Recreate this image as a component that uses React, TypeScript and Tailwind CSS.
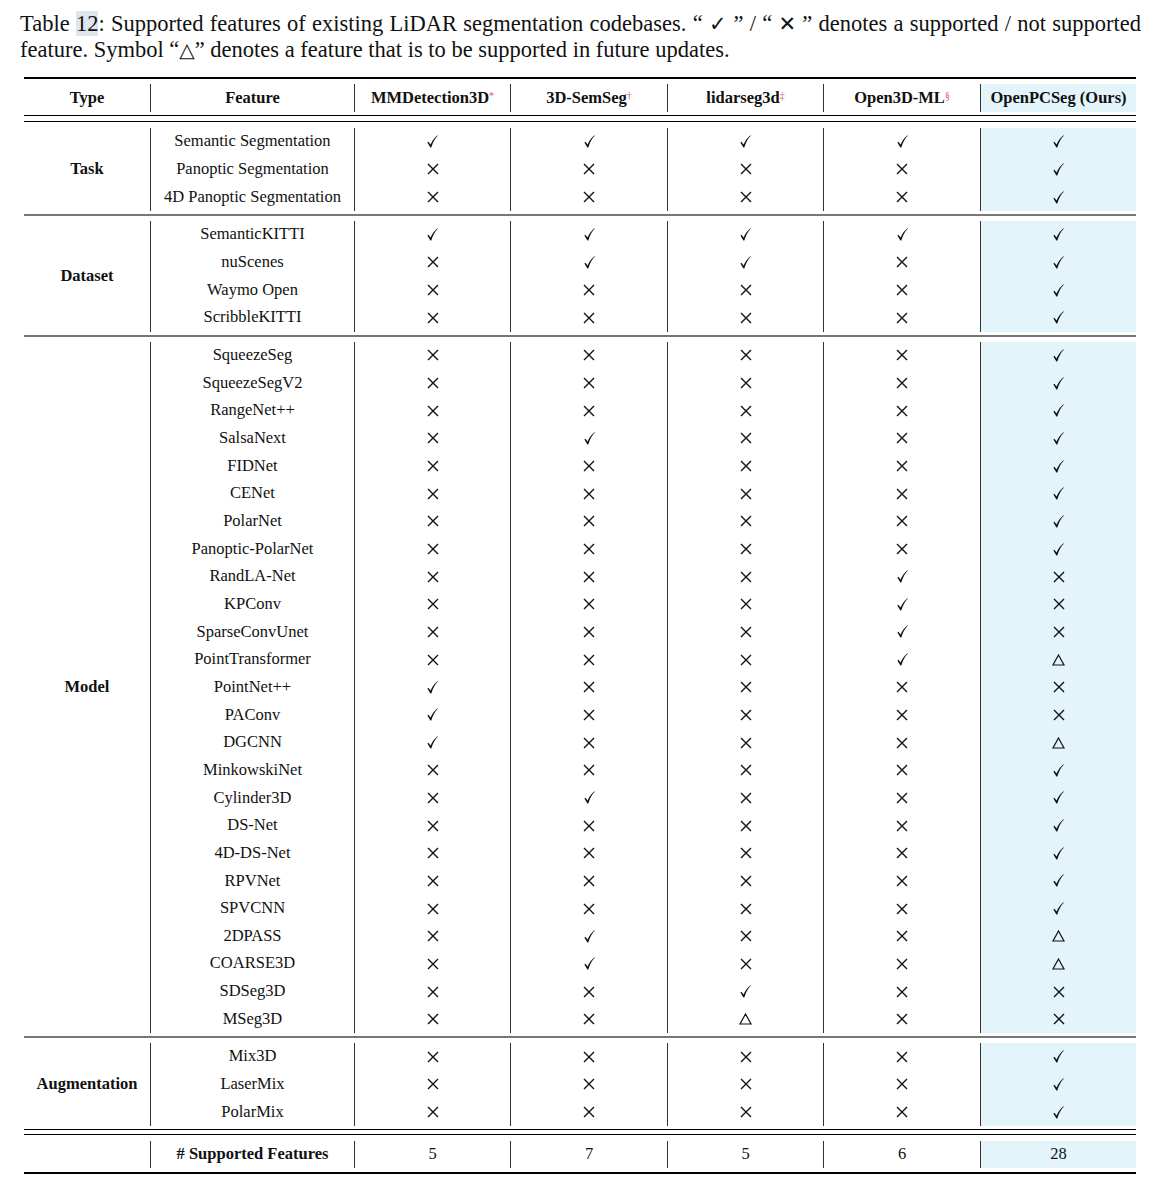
import React from 'react'

type Mark = 'c' | 'x' | 't'

const groups: { type: string; rows: [string, string][] }[] = [
  {
    type: 'Task',
    rows: [
      ['Semantic Segmentation', 'ccccc'],
      ['Panoptic Segmentation', 'xxxxc'],
      ['4D Panoptic Segmentation', 'xxxxc'],
    ],
  },
  {
    type: 'Dataset',
    rows: [
      ['SemanticKITTI', 'ccccc'],
      ['nuScenes', 'xccxc'],
      ['Waymo Open', 'xxxxc'],
      ['ScribbleKITTI', 'xxxxc'],
    ],
  },
  {
    type: 'Model',
    rows: [
      ['SqueezeSeg', 'xxxxc'],
      ['SqueezeSegV2', 'xxxxc'],
      ['RangeNet++', 'xxxxc'],
      ['SalsaNext', 'xcxxc'],
      ['FIDNet', 'xxxxc'],
      ['CENet', 'xxxxc'],
      ['PolarNet', 'xxxxc'],
      ['Panoptic-PolarNet', 'xxxxc'],
      ['RandLA-Net', 'xxxcx'],
      ['KPConv', 'xxxcx'],
      ['SparseConvUnet', 'xxxcx'],
      ['PointTransformer', 'xxxct'],
      ['PointNet++', 'cxxxx'],
      ['PAConv', 'cxxxx'],
      ['DGCNN', 'cxxxt'],
      ['MinkowskiNet', 'xxxxc'],
      ['Cylinder3D', 'xcxxc'],
      ['DS-Net', 'xxxxc'],
      ['4D-DS-Net', 'xxxxc'],
      ['RPVNet', 'xxxxc'],
      ['SPVCNN', 'xxxxc'],
      ['2DPASS', 'xcxxt'],
      ['COARSE3D', 'xcxxt'],
      ['SDSeg3D', 'xxcxx'],
      ['MSeg3D', 'xxtxx'],
    ],
  },
  {
    type: 'Augmentation',
    rows: [
      ['Mix3D', 'xxxxc'],
      ['LaserMix', 'xxxxc'],
      ['PolarMix', 'xxxxc'],
    ],
  },
]

const colWidths = ['w-[156px]', 'w-[157px]', 'w-[156px]', 'w-[157px]', 'w-[156px]']

function Check() {
  return (
    <svg width="11" height="13" viewBox="0 0 11 13">
      <path
        d="M0.4 7.4 L1.4 6.7 L3.6 9.6 C5 6 7.4 2.6 10.5 0.3 L10.8 0.8 C8.2 3.2 5.9 7 4.3 12.6 L3.4 12.6 Z"
        fill="#111"
      />
    </svg>
  )
}

function Cross() {
  return (
    <svg width="12" height="12" viewBox="0 0 12 12">
      <path d="M1 1 L11 11 M11 1 L1 11" stroke="#111" strokeWidth="1.4" />
    </svg>
  )
}

function Tri() {
  return (
    <svg width="13" height="12" viewBox="0 0 13 12">
      <path d="M6.5 1 L12 11 L1 11 Z" fill="none" stroke="#111" strokeWidth="1.2" strokeLinejoin="miter" />
    </svg>
  )
}

function Sym({ m }: { m: Mark }) {
  if (m === 'c') return <Check />
  if (m === 't') return <Tri />
  return <Cross />
}

function Group({ type, rows }: { type: string; rows: [string, string][] }) {
  return (
    <div className="flex pt-[5px] pb-[3px]">
      <div className="w-[126px] flex items-center justify-center font-bold">{type}</div>
      <div className="w-[204px] border-l border-[#333]">
        {rows.map(([name]) => (
          <div key={name} className="h-[27.67px] flex items-center justify-center">
            {name}
          </div>
        ))}
      </div>
      {colWidths.map((w, ci) => (
        <div key={ci} className={`${w} border-l border-[#333] ${ci === 4 ? 'bg-[#e3f4fb]' : ''}`}>
          {rows.map(([name, marks]) => (
            <div key={name} className="h-[27.67px] flex items-center justify-center">
              <Sym m={marks[ci] as Mark} />
            </div>
          ))}
        </div>
      ))}
    </div>
  )
}

function Sup({ children }: { children: React.ReactNode }) {
  return <sup className="text-[10px] font-normal text-[#e8504f] relative -top-[4px]">{children}</sup>
}

export default function App() {
  const heads: React.ReactNode[] = [
    <>MMDetection3D<Sup>*</Sup></>,
    <>3D-SemSeg<Sup>†</Sup></>,
    <>lidarseg3d<Sup>‡</Sup></>,
    <>Open3D-ML<Sup>§</Sup></>,
    <>OpenPCSeg (Ours)</>,
  ]
  const totals = ['5', '7', '5', '6', '28']

  return (
    <div className="w-[1168px] h-[1188px] bg-white text-[#111] font-['Liberation_Serif',serif]">
      <div className="pl-[20px] pr-[27px] pt-[11px] text-[22.5px] leading-[26px]">
        <div className="text-justify [text-align-last:justify]">
          Table <span className="bg-[#dfe4ef]">12</span>: Supported features of existing LiDAR segmentation codebases. “{' '}
          <span className="font-['DejaVu_Sans',sans-serif] text-[21px]">✓</span> ” / “{' '}
          <span className="font-['DejaVu_Sans',sans-serif] text-[21px]">✕</span> ” denotes a supported / not supported
        </div>
        <div>
          feature. Symbol “<span className="font-['DejaVu_Sans',sans-serif] text-[20px]">△</span>” denotes a feature that is to be supported in future updates.
        </div>
      </div>

      <div className="ml-[24px] w-[1112px] mt-[14px] text-[16.5px]">
        <div className="h-[2px] bg-black" />
        <div className="flex pt-[5px] pb-[3px] font-bold">
          <div className="w-[126px] h-[28px] flex items-center justify-center">Type</div>
          <div className="w-[204px] h-[28px] border-l border-[#333] flex items-center justify-center">Feature</div>
          {heads.map((h, i) => (
            <div
              key={i}
              className={`${colWidths[i]} h-[28px] border-l border-[#333] flex items-center justify-center ${i === 4 ? 'bg-[#e3f4fb]' : ''}`}
            >
              <span>{h}</span>
            </div>
          ))}
        </div>
        <div className="h-px bg-black" />
        <div className="h-[5px]" />
        <div className="h-px bg-black" />
        <div className="h-px" />

        {groups.map((g, gi) => (
          <React.Fragment key={g.type}>
            {gi > 0 && <div className="h-[2px] bg-[#777]" />}
            <Group type={g.type} rows={g.rows} />
          </React.Fragment>
        ))}

        <div className="h-px bg-black" />
        <div className="h-[4px]" />
        <div className="h-px bg-black" />
        <div className="flex pt-[6px] pb-[4px]">
          <div className="w-[126px] h-[27px]" />
          <div className="w-[204px] h-[27px] border-l border-[#333] flex items-center justify-center font-bold">
            # Supported Features
          </div>
          {totals.map((t, i) => (
            <div
              key={i}
              className={`${colWidths[i]} h-[27px] border-l border-[#333] flex items-center justify-center ${i === 4 ? 'bg-[#e3f4fb]' : ''}`}
            >
              {t}
            </div>
          ))}
        </div>
        <div className="h-[2px] bg-black" />
      </div>
    </div>
  )
}
